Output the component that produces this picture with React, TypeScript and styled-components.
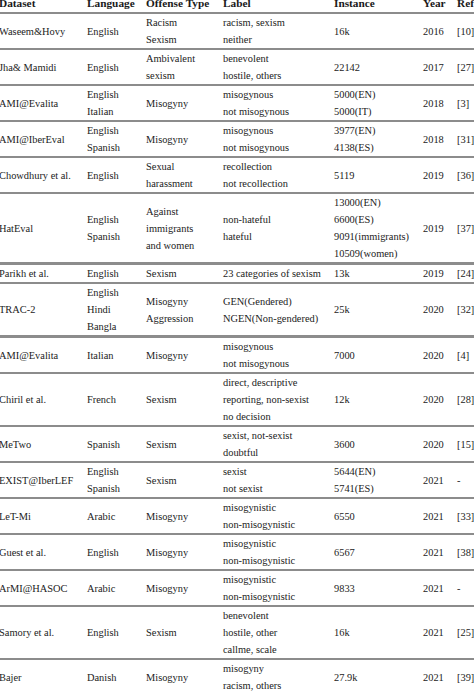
import styled, { createGlobalStyle } from "styled-components";

const GlobalStyle = createGlobalStyle`
  html, body {
    margin: 0;
    padding: 0;
    background: #ffffff;
    overflow: hidden;
  }
`;

const Page = styled.div`
  width: 474px;
  height: 692px;
  overflow: hidden;
  background: #ffffff;
`;

const Table = styled.div`
  width: 500px;
  margin-top: -5px;
  margin-left: -1px;
  font-family: "Liberation Serif", "Times New Roman", serif;
  color: #222222;
`;

const Row = styled.div<{ $thick?: boolean }>`
  display: grid;
  grid-template-columns: 88px 59px 77px 111px 89px 34px 42px;
  border-bottom: ${(p) => (p.$thick ? "3px" : "2px")} solid #8c8c8c;
`;

const HeadCell = styled.div`
  font-size: 11.3px;
  font-weight: 700;
  line-height: 17px;
  white-space: nowrap;
  color: #1a1a1a;
`;

const Cell = styled.div`
  display: flex;
  flex-direction: column;
  justify-content: center;
  font-size: 10.4px;
  line-height: 17px;
  white-space: nowrap;
`;

const Line = styled.span`
  display: block;
`;

interface Dataset {
  name: string;
  language: string[];
  offense: string[];
  label: string[];
  instance: string[];
  year: string;
  ref: string;
  thick?: boolean;
}

const headers = ["Dataset", "Language", "Offense Type", "Label", "Instance", "Year", "Ref"];

const rows: Dataset[] = [
  { name: "Waseem&Hovy", language: ["English"], offense: ["Racism", "Sexism"], label: ["racism, sexism", "neither"], instance: ["16k"], year: "2016", ref: "[10]" },
  { name: "Jha& Mamidi", language: ["English"], offense: ["Ambivalent", "sexism"], label: ["benevolent", "hostile, others"], instance: ["22142"], year: "2017", ref: "[27]" },
  { name: "AMI@Evalita", language: ["English", "Italian"], offense: ["Misogyny"], label: ["misogynous", "not misogynous"], instance: ["5000(EN)", "5000(IT)"], year: "2018", ref: "[3]" },
  { name: "AMI@IberEval", language: ["English", "Spanish"], offense: ["Misogyny"], label: ["misogynous", "not misogynous"], instance: ["3977(EN)", "4138(ES)"], year: "2018", ref: "[31]" },
  { name: "Chowdhury et al.", language: ["English"], offense: ["Sexual", "harassment"], label: ["recollection", "not recollection"], instance: ["5119"], year: "2019", ref: "[36]" },
  { name: "HatEval", language: ["English", "Spanish"], offense: ["Against", "immigrants", "and women"], label: ["non-hateful", "hateful"], instance: ["13000(EN)", "6600(ES)", "9091(immigrants)", "10509(women)"], year: "2019", ref: "[37]", thick: true },
  { name: "Parikh et al.", language: ["English"], offense: ["Sexism"], label: ["23 categories of sexism"], instance: ["13k"], year: "2019", ref: "[24]" },
  { name: "TRAC-2", language: ["English", "Hindi", "Bangla"], offense: ["Misogyny", "Aggression"], label: ["GEN(Gendered)", "NGEN(Non-gendered)"], instance: ["25k"], year: "2020", ref: "[32]", thick: true },
  { name: "AMI@Evalita", language: ["Italian"], offense: ["Misogyny"], label: ["misogynous", "not misogynous"], instance: ["7000"], year: "2020", ref: "[4]" },
  { name: "Chiril et al.", language: ["French"], offense: ["Sexism"], label: ["direct, descriptive", "reporting, non-sexist", "no decision"], instance: ["12k"], year: "2020", ref: "[28]" },
  { name: "MeTwo", language: ["Spanish"], offense: ["Sexism"], label: ["sexist, not-sexist", "doubtful"], instance: ["3600"], year: "2020", ref: "[15]" },
  { name: "EXIST@IberLEF", language: ["English", "Spanish"], offense: ["Sexism"], label: ["sexist", "not sexist"], instance: ["5644(EN)", "5741(ES)"], year: "2021", ref: "-" },
  { name: "LeT-Mi", language: ["Arabic"], offense: ["Misogyny"], label: ["misogynistic", "non-misogynistic"], instance: ["6550"], year: "2021", ref: "[33]" },
  { name: "Guest et al.", language: ["English"], offense: ["Misogyny"], label: ["misogynistic", "non-misogynistic"], instance: ["6567"], year: "2021", ref: "[38]" },
  { name: "ArMI@HASOC", language: ["Arabic"], offense: ["Misogyny"], label: ["misogynistic", "non-misogynistic"], instance: ["9833"], year: "2021", ref: "-" },
  { name: "Samory et al.", language: ["English"], offense: ["Sexism"], label: ["benevolent", "hostile, other", "callme, scale"], instance: ["16k"], year: "2021", ref: "[25]" },
  { name: "Bajer", language: ["Danish"], offense: ["Misogyny"], label: ["misogyny", "racism, others"], instance: ["27.9k"], year: "2021", ref: "[39]" },
];

function Lines({ items }: { items: string[] }) {
  return (
    <Cell>
      {items.map((t, i) => (
        <Line key={i}>{t}</Line>
      ))}
    </Cell>
  );
}

function App() {
  return (
    <Page>
      <GlobalStyle />
      <Table>
        <Row>
          {headers.map((h) => (
            <HeadCell key={h}>{h}</HeadCell>
          ))}
        </Row>
        {rows.map((r, i) => (
          <Row key={i} $thick={r.thick}>
            <Lines items={[r.name]} />
            <Lines items={r.language} />
            <Lines items={r.offense} />
            <Lines items={r.label} />
            <Lines items={r.instance} />
            <Lines items={[r.year]} />
            <Lines items={[r.ref]} />
          </Row>
        ))}
      </Table>
    </Page>
  );
}

export default App;
